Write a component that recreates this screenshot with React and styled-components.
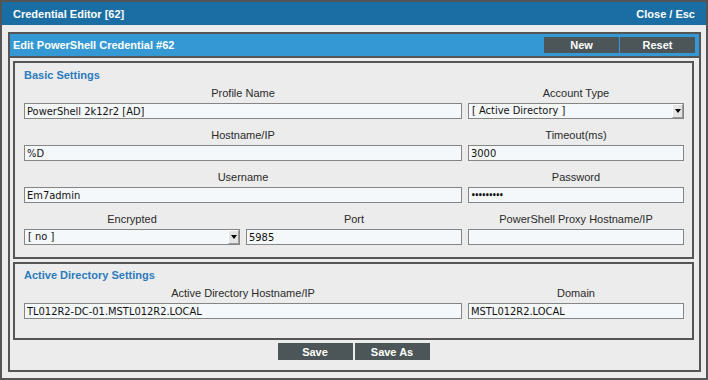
import styled, { createGlobalStyle } from "styled-components";

const GlobalStyle = createGlobalStyle`
  html, body {
    margin: 0;
    padding: 0;
    background: #ececec;
  }
  * {
    box-sizing: border-box;
  }
`;

const Window = styled.div`
  width: 708px;
  height: 380px;
  border: 2px solid #555;
  background: #ececec;
  display: flex;
  flex-direction: column;
  font-family: "Liberation Sans", Arial, sans-serif;
`;

const TitleBar = styled.div`
  height: 23px;
  flex: none;
  background: #1b6ea4;
  color: #fff;
  font-weight: 700;
  font-size: 11px;
  padding: 0 11px 0 11px;
  display: flex;
  align-items: center;
  justify-content: space-between;
`;

const Body = styled.div`
  flex: 1;
  padding: 7px 5px 6px 6px;
  display: flex;
`;

const Panel = styled.div`
  flex: 1;
  border: 2px solid #555;
  display: flex;
  flex-direction: column;
`;

const PanelHeader = styled.div`
  height: 24px;
  background: #3398d3;
  border-bottom: 2px solid #555;
  padding: 0 4px 0 3px;
  display: flex;
  align-items: center;
  justify-content: space-between;
  color: #fff;
  font-weight: 700;
  font-size: 11px;
`;

const ButtonGroup = styled.div`
  display: flex;
  gap: ${p => p.$gap || 1}px;
  justify-content: ${p => p.$center ? "center" : "flex-end"};
`;

const Button = styled.button`
  width: 75px;
  height: ${p => p.$h || 16}px;
  padding: 0;
  border: none;
  background: #4c5557;
  color: #fff;
  font-family: "Liberation Sans", Arial, sans-serif;
  font-weight: 700;
  font-size: 11px;
  cursor: pointer;
`;

const Content = styled.div`
  flex: 1;
  padding: 3px 5px 10px 3px;
  display: flex;
  flex-direction: column;
  gap: 3px;
`;

const Fieldset = styled.section`
  border: 2px solid #555;
  padding: ${p => p.$top}px 8px ${p => p.$bottom}px 9px;
`;

const Legend = styled.div`
  color: #2b7bbd;
  font-weight: 700;
  font-size: 11px;
  line-height: 14px;
  margin-bottom: 4px;
`;

const Grid = styled.div`
  display: grid;
  grid-template-columns: repeat(3, 216px);
  column-gap: 6px;
  row-gap: 9px;
`;

const Field = styled.div`
  grid-column: span ${p => p.$span || 1};
  display: flex;
  flex-direction: column;
  gap: 3px;
`;

const Label = styled.label`
  text-align: center;
  font-size: 11px;
  line-height: 14px;
  color: #2a2a2a;
`;

const Input = styled.input`
  height: 16px;
  width: 100%;
  border: 1px solid #858585;
  background: #f5f8fa;
  padding: 0 2px;
  margin: 0;
  font-family: "DejaVu Sans Condensed", "DejaVu Sans", sans-serif;
  font-size: ${p => p.$size || 11}px;
  font-weight: ${p => p.$bold ? 700 : 400};
  letter-spacing: ${p => p.$spacing || 0}px;
  color: #111;
  outline: none;
`;

const Select = styled.div`
  height: 16px;
  border: 1px solid #858585;
  background: #f5f8fa;
  display: flex;
  align-items: stretch;
  font-family: "DejaVu Sans Condensed", "DejaVu Sans", sans-serif;
  font-size: 11px;
  color: #111;
`;

const SelectValue = styled.span`
  flex: 1;
  padding-left: 3px;
  line-height: 14px;
  white-space: pre;
`;

const SelectArrow = styled.span`
  width: 11px;
  background: #e4e4e4;
  border-left: 1px solid #fff;
  border-top: 1px solid #fff;
  border-right: 1px solid #9a9a9a;
  border-bottom: 1px solid #9a9a9a;
  display: flex;
  align-items: center;
  justify-content: center;
  &::after {
    content: "";
    border-left: 3px solid transparent;
    border-right: 3px solid transparent;
    border-top: 4px solid #000;
  }
`;

function Dropdown({ value }) {
  return (
    <Select>
      <SelectValue>{value}</SelectValue>
      <SelectArrow />
    </Select>
  );
}

export default function App() {
  return (
    <>
      <GlobalStyle />
      <Window>
        <TitleBar>
          <span>Credential Editor [62]</span>
          <span>Close / Esc</span>
        </TitleBar>
        <Body>
          <Panel>
            <PanelHeader>
              <span>Edit PowerShell Credential #62</span>
              <ButtonGroup $gap={1}>
                <Button>New</Button>
                <Button>Reset</Button>
              </ButtonGroup>
            </PanelHeader>
            <Content>
              <Fieldset $top={5} $bottom={12}>
                <Legend>Basic Settings</Legend>
                <Grid>
                  <Field $span={2}>
                    <Label>Profile Name</Label>
                    <Input readOnly value="PowerShell 2k12r2 [AD]" />
                  </Field>
                  <Field>
                    <Label>Account Type</Label>
                    <Dropdown value="[ Active Directory ]" />
                  </Field>
                  <Field $span={2}>
                    <Label>Hostname/IP</Label>
                    <Input readOnly value="%D" />
                  </Field>
                  <Field>
                    <Label>Timeout(ms)</Label>
                    <Input readOnly value="3000" />
                  </Field>
                  <Field $span={2}>
                    <Label>Username</Label>
                    <Input readOnly value="Em7admin" />
                  </Field>
                  <Field>
                    <Label>Password</Label>
                    <Input readOnly value="•••••••••" $size={8} $spacing={-1.1} $bold />
                  </Field>
                  <Field>
                    <Label>Encrypted</Label>
                    <Dropdown value="[ no ]" />
                  </Field>
                  <Field>
                    <Label>Port</Label>
                    <Input readOnly value="5985" />
                  </Field>
                  <Field>
                    <Label>PowerShell Proxy Hostname/IP</Label>
                    <Input readOnly value="" />
                  </Field>
                </Grid>
              </Fieldset>
              <Fieldset $top={4} $bottom={19}>
                <Legend>Active Directory Settings</Legend>
                <Grid>
                  <Field $span={2}>
                    <Label>Active Directory Hostname/IP</Label>
                    <Input readOnly value="TL012R2-DC-01.MSTL012R2.LOCAL" />
                  </Field>
                  <Field>
                    <Label>Domain</Label>
                    <Input readOnly value="MSTL012R2.LOCAL" />
                  </Field>
                </Grid>
              </Fieldset>
              <ButtonGroup $gap={2} $center>
                <Button $h={17}>Save</Button>
                <Button $h={17}>Save As</Button>
              </ButtonGroup>
            </Content>
          </Panel>
        </Body>
      </Window>
    </>
  );
}
